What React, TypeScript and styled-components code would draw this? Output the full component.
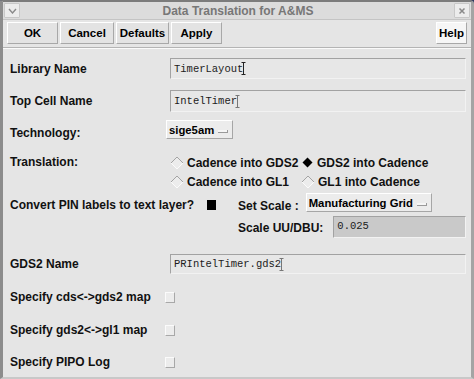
import React from "react";
import styled, { createGlobalStyle } from "styled-components";

const Global = createGlobalStyle`
  html, body { margin: 0; padding: 0; background: #27345e; }
  body { width: 474px; height: 379px; overflow: hidden; }
  * { box-sizing: border-box; }
`;

const Window = styled.div`
  width: 474px;
  height: 379px;
  background: #e5e5e5;
  border-left: 3px solid #8c8c8c;
  border-top: 2px solid #7c7c7c;
  border-right: 3px solid #a4a4a4;
  border-bottom: 2px solid #c8c8c8;
  border-top-right-radius: 4px;
  display: flex;
  flex-direction: column;
  font-family: "Liberation Sans", Arial, sans-serif;
  color: #111;
  overflow: hidden;
`;

const TitleBar = styled.div`
  height: 18px;
  background: #dcdcdc;
  border-bottom: 1px solid #c4c4c4;
  display: flex;
  align-items: center;
  padding: 0 1px 0 1px;
`;

const TitleBtn = styled.div`
  width: 16px;
  height: 15px;
  background: #ececec;
  border: 1px solid #c8c8c8;
  border-radius: 1px;
  display: flex;
  align-items: center;
  justify-content: center;
`;

const Title = styled.div`
  flex: 1;
  text-align: center;
  font-weight: bold;
  font-size: 12px;
  color: #777;
  padding-left: 2px;
`;

const ButtonBar = styled.div`
  height: 27px;
  display: flex;
  align-items: flex-start;
  padding: 2px 4px 0 4px;
  gap: 2px;
`;

const Button = styled.div<{ $w: number; $light?: boolean }>`
  width: ${(p) => p.$w}px;
  height: 22px;
  background: ${(p) => (p.$light ? "#f6f6f6" : "#e3e3e3")};
  border-top: 1px solid #ffffff;
  border-left: 1px solid #ffffff;
  border-right: 1px solid #a8a8a8;
  border-bottom: 1px solid #a8a8a8;
  display: flex;
  align-items: center;
  justify-content: center;
  font-weight: bold;
  font-size: 11.5px;
  color: #000;
`;

const Spacer = styled.div`
  flex: 1;
`;

const Separator = styled.div`
  height: 2px;
  border-top: 1px solid #b4b4b4;
  border-bottom: 1px solid #fafafa;
`;

const Form = styled.div`
  display: flex;
  flex-direction: column;
  padding: 9px 5px 0 7px;
`;

const Row = styled.div<{ $h: number; $mt: number; $top?: boolean }>`
  display: grid;
  grid-template-columns: 160px 1fr;
  align-items: ${(p) => (p.$top ? "start" : "center")};
  height: ${(p) => p.$h}px;
  margin-top: ${(p) => p.$mt}px;
`;

const Label = styled.div<{ $dy?: number }>`
  font-weight: bold;
  font-size: 12px;
  white-space: nowrap;
  position: relative;
  top: ${(p) => p.$dy ?? 0}px;
`;

const TextField = styled.div<{ $dark?: boolean; $top?: boolean }>`
  height: 100%;
  background: ${(p) => (p.$dark ? "#c9c9c9" : "#e7e7e7")};
  border-top: 1px solid #a2a2a2;
  border-left: 1px solid #a2a2a2;
  border-right: 1px solid #f2f2f2;
  border-bottom: 1px solid #f2f2f2;
  display: flex;
  align-items: ${(p) => (p.$top ? "flex-start" : "center")};
  padding: ${(p) => (p.$top ? "3px 0 0 3px" : "0 0 0 3px")};
  font-family: "Liberation Mono", "Courier New", monospace;
  font-size: 10.5px;
  color: #1c1c1c;
  white-space: pre;
`;

const Dropdown = styled.div<{ $ml?: number }>`
  justify-self: start;
  margin-left: ${(p) => p.$ml ?? 0}px;
  height: 19px;
  background: #ececec;
  border-top: 1px solid #ffffff;
  border-left: 1px solid #ffffff;
  border-right: 1px solid #a6a6a6;
  border-bottom: 1px solid #a6a6a6;
  display: flex;
  align-items: center;
  padding: 0 4px 0 2px;
  gap: 4px;
  font-weight: bold;
  font-size: 11.3px;
  color: #000;
  white-space: nowrap;
`;

const DropMark = styled.span`
  width: 10px;
  height: 3px;
  background: #f6f6f6;
  border-bottom: 1px solid #9a9a9a;
  border-right: 1px solid #9a9a9a;
  margin-top: 3px;
`;

const RadioGrid = styled.div`
  display: grid;
  grid-template-columns: 131px 1fr;
  grid-auto-rows: 19px;
  align-items: center;
`;

const Radio = styled.div`
  display: flex;
  align-items: center;
  gap: 3px;
  font-weight: bold;
  font-size: 12px;
  white-space: nowrap;
`;

const CheckBox = styled.div<{ $on?: boolean; $ml?: number }>`
  width: ${(p) => (p.$on ? 9 : 10)}px;
  height: ${(p) => (p.$on ? 10 : 11)}px;
  margin-left: ${(p) => p.$ml ?? 0}px;
  background: ${(p) => (p.$on ? "#000" : "#ececec")};
  border-top: 1px solid ${(p) => (p.$on ? "#000" : "#fbfbfb")};
  border-left: 1px solid ${(p) => (p.$on ? "#000" : "#fbfbfb")};
  border-right: 1px solid ${(p) => (p.$on ? "#000" : "#a8a8a8")};
  border-bottom: 1px solid ${(p) => (p.$on ? "#000" : "#a8a8a8")};
`;

const ConvertRow = styled.div`
  display: flex;
  margin-top: 2px;
`;

const ConvertLeft = styled.div`
  display: flex;
  align-items: center;
  height: 21px;
  width: 228px;
  gap: 13px;
  padding-top: 3px;
`;

const ScaleBlock = styled.div`
  display: flex;
  flex-direction: column;
  gap: 4px;
  flex: 1;
`;

const ScaleRow = styled.div<{ $gap: number; $h: number }>`
  display: flex;
  align-items: center;
  gap: ${(p) => p.$gap}px;
  height: ${(p) => p.$h}px;
`;

const ScaleField = styled.div`
  flex: 1;
  height: 100%;
`;

const Diamond = ({ on }: { on?: boolean }) =>
  on ? (
    <svg width="13" height="13" viewBox="0 0 13 13">
      <path d="M6.5 1.5 L11.5 6.5 L6.5 11.5 L1.5 6.5 Z" fill="#000" />
    </svg>
  ) : (
    <svg width="14" height="14" viewBox="0 0 14 14">
      <path d="M7 1 L13 7 L7 13 L1 7 Z" fill="#ececec" />
      <path d="M1 7 L7 1 L13 7" fill="none" stroke="#a4a4a4" strokeWidth="1" />
      <path d="M1 7 L7 13 L13 7" fill="none" stroke="#fbfbfb" strokeWidth="1" />
    </svg>
  );

const IBeam = ({ dark }: { dark?: boolean }) => (
  <svg width="5" height="13" viewBox="0 0 5 13" style={{ marginLeft: -2 }}>
    <path
      d="M0.5 0.5 H4.5 M2.5 0.5 V12.5 M0.5 12.5 H4.5"
      stroke={dark ? "#222" : "#777"}
      strokeWidth="1"
      fill="none"
    />
  </svg>
);

export default function App() {
  return (
    <>
      <Global />
      <Window>
        <TitleBar>
          <TitleBtn>
            <svg width="9" height="6" viewBox="0 0 9 6">
              <path d="M1 1 L4.5 5 L8 1" stroke="#8a8a8a" strokeWidth="1.4" fill="none" />
            </svg>
          </TitleBtn>
          <Title>Data Translation for A&amp;MS</Title>
          <TitleBtn>
            <svg width="8" height="8" viewBox="0 0 8 8">
              <path d="M1.5 1.5 L6.5 6.5 M6.5 1.5 L1.5 6.5" stroke="#8a8a8a" strokeWidth="1.5" />
            </svg>
          </TitleBtn>
        </TitleBar>
        <ButtonBar>
          <Button $w={51}>OK</Button>
          <Button $w={54}>Cancel</Button>
          <Button $w={53}>Defaults</Button>
          <Button $w={51}>Apply</Button>
          <Spacer />
          <Button $w={31} $light>
            Help
          </Button>
        </ButtonBar>
        <Separator />
        <Form>
          <Row $h={21} $mt={0}>
            <Label>Library Name</Label>
            <TextField>
              TimerLayout
              <IBeam dark />
            </TextField>
          </Row>
          <Row $h={22} $mt={11}>
            <Label>Top Cell Name</Label>
            <TextField>
              IntelTimer
              <IBeam />
            </TextField>
          </Row>
          <Row $h={19} $mt={8}>
            <Label $dy={3}>Technology:</Label>
            <Dropdown $ml={-4}>
              sige5am
              <DropMark />
            </Dropdown>
          </Row>
          <Row $h={38} $mt={14} $top>
            <Label $dy={2}>Translation:</Label>
            <RadioGrid>
              <Radio>
                <Diamond />
                Cadence into GDS2
              </Radio>
              <Radio>
                <Diamond on />
                GDS2 into Cadence
              </Radio>
              <Radio>
                <Diamond />
                Cadence into GL1
              </Radio>
              <Radio>
                <Diamond />
                GL1 into Cadence
              </Radio>
            </RadioGrid>
          </Row>
          <ConvertRow>
            <ConvertLeft>
              <Label>Convert PIN labels to text layer?</Label>
              <CheckBox $on />
            </ConvertLeft>
            <ScaleBlock>
              <ScaleRow $gap={7} $h={19}>
                <Label $dy={3}>Set Scale :</Label>
                <Dropdown>
                  Manufacturing Grid
                  <DropMark />
                </Dropdown>
              </ScaleRow>
              <ScaleRow $gap={10} $h={22}>
                <Label $dy={1}>Scale UU/DBU:</Label>
                <ScaleField>
                  <TextField $dark $top>
                    0.025
                  </TextField>
                </ScaleField>
              </ScaleRow>
            </ScaleBlock>
          </ConvertRow>
          <Row $h={20} $mt={16}>
            <Label>GDS2 Name</Label>
            <TextField>
              PRIntelTimer.gds2
              <IBeam />
            </TextField>
          </Row>
          <Row $h={20} $mt={13}>
            <Label>Specify cds&lt;-&gt;gds2 map</Label>
            <CheckBox $ml={-5} />
          </Row>
          <Row $h={20} $mt={13}>
            <Label>Specify gds2&lt;-&gt;gl1 map</Label>
            <CheckBox $ml={-5} />
          </Row>
          <Row $h={20} $mt={12}>
            <Label>Specify PIPO Log</Label>
            <CheckBox $ml={-5} />
          </Row>
        </Form>
      </Window>
    </>
  );
}
